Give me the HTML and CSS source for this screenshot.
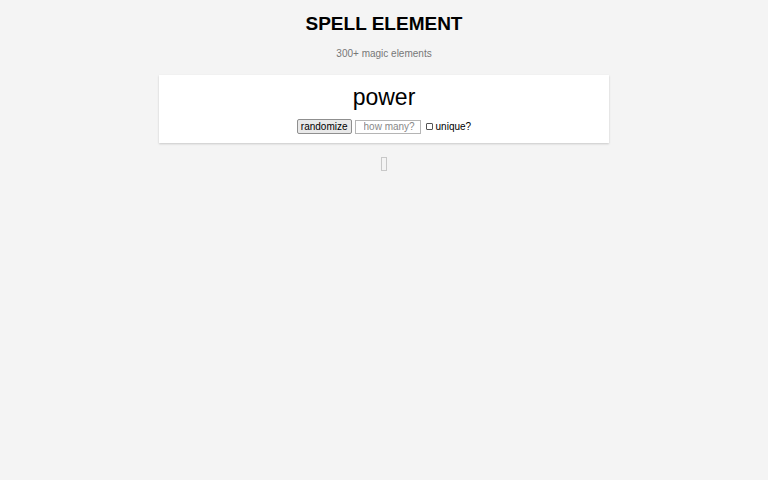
FILE: index.html
```html
<!DOCTYPE html>
<html>
<head>
<meta charset="utf-8">
<link rel="stylesheet" href="styles.css">
</head>
<body>
<header class="head">
  <h1 class="title">SPELL ELEMENT</h1>
  <p class="subtitle">300+ magic elements</p>
</header>
<main class="card">
  <div class="word">power</div>
  <div class="controls">
    <button class="btn">randomize</button>
    <input class="count" type="text" placeholder="how many?">
    <label class="check"><input type="checkbox"> unique?</label>
  </div>
</main>
<div class="share"><span class="glyph"></span></div>
</body>
</html>
```
FILE: styles.css
```css
html, body {
  margin: 0;
  padding: 0;
  background: #f4f4f4;
  font-family: "Liberation Sans", Arial, sans-serif;
  color: #000;
}
.head {
  text-align: center;
  padding-top: 13px;
}
.title {
  margin: 0;
  font-size: 19px;
  font-weight: bold;
  line-height: 22px;
}
.subtitle {
  margin: 13px 0 0;
  font-size: 10px;
  line-height: 12px;
  color: #777;
}
.card {
  width: 450px;
  margin: 15px auto 0;
  background: #fff;
  box-shadow: 0 1px 2px rgba(0,0,0,0.18);
  text-align: center;
  padding: 10px 0 9px;
  height: 49px;
  box-sizing: content-box;
}
.word {
  font-size: 23px;
  line-height: 25px;
}
.controls {
  display: flex;
  justify-content: center;
  align-items: center;
  gap: 3px;
  margin-top: 9px;
  font-size: 10px;
}
.btn {
  font-family: "Liberation Sans", Arial, sans-serif;
  font-size: 10px;
  height: 15px;
  padding: 0 3px;
  background: #e9e9e9;
  border: 1px solid #8f8f8f;
  border-radius: 2px;
  color: #000;
}
.count {
  font-family: "Liberation Sans", Arial, sans-serif;
  font-size: 10px;
  width: 66px;
  height: 14px;
  box-sizing: border-box;
  border: 1px solid #b5b5b5;
  padding: 0 0 0 8px;
  margin-left: 0;
}
.count::placeholder { color: #888; }
.check {
  display: flex;
  align-items: center;
  margin-left: 2px;
}
.check input {
  appearance: none;
  width: 7px;
  height: 7px;
  margin: 0 3px 0 0;
  border: 1px solid #555;
  border-radius: 1px;
  background: #fff;
}
.share {
  display: flex;
  justify-content: center;
  margin-top: 14px;
}
.glyph {
  width: 4px;
  height: 12px;
  border: 1px solid #c8c8c8;
}
```
